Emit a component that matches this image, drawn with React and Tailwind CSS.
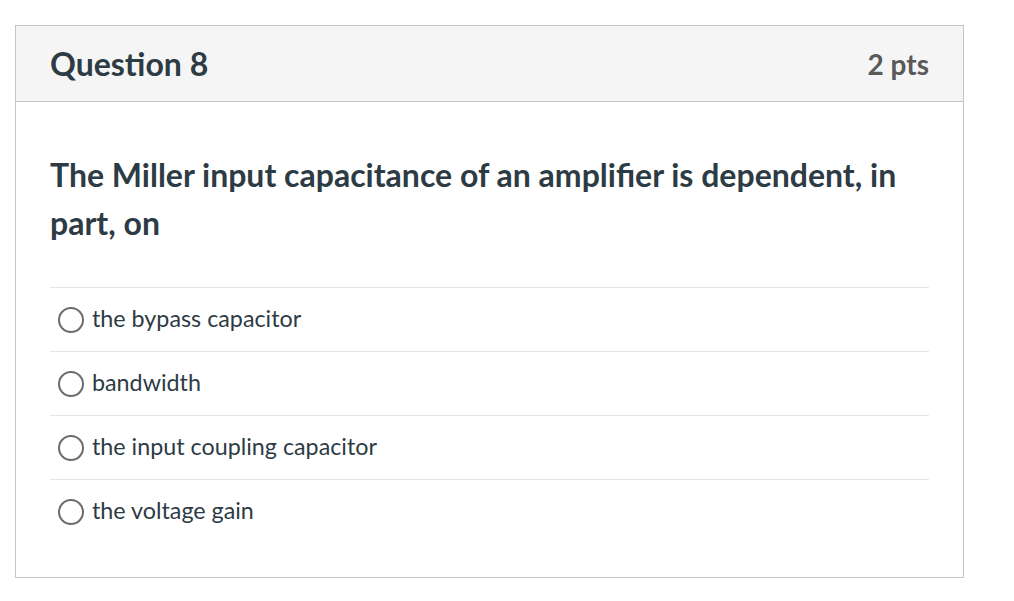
import React from 'react';

const options = [
  'the bypass capacitor',
  'bandwidth',
  'the input coupling capacitor',
  'the voltage gain',
];

const App = () => {
  return (
    <div className="w-[1014px] h-[601px] bg-white pt-[25px] pl-[15px]" style={{ fontFamily: 'Lato, "Noto Sans", sans-serif' }}>
      <div className="w-[949px] border border-[#c4c4c4]">
        {/* header */}
        <div className="h-[76px] bg-[#f5f5f5] border-b border-[#c4c4c4] px-[34px] flex items-center justify-between">
          <h2 className="text-[32px] font-bold text-[#2d3b45]">Question 8</h2>
          <span className="text-[28px] font-bold text-[#595959]">2 pts</span>
        </div>

        {/* body */}
        <div className="px-[34px] pt-[49px] pb-[34px]">
          <p className="text-[32px] font-bold leading-[48px] text-[#2d3b45]">
            The Miller input capacitance of an amplifier is dependent, in part, on
          </p>

          <div className="mt-[40px]">
            {options.map((opt, i) => (
              <label key={i} className="h-[64px] flex items-center border-t border-[#e4e4e4] pl-[8px] pb-[3px] gap-[8px] text-[23.3px] text-[#2d3b45]">
                <span className="w-[26px] h-[26px] mt-[3px] rounded-full border-2 border-[#6b6b6b] bg-white"></span>
                {opt}
              </label>
            ))}
          </div>
        </div>
      </div>
    </div>
  );
};

export default App;
